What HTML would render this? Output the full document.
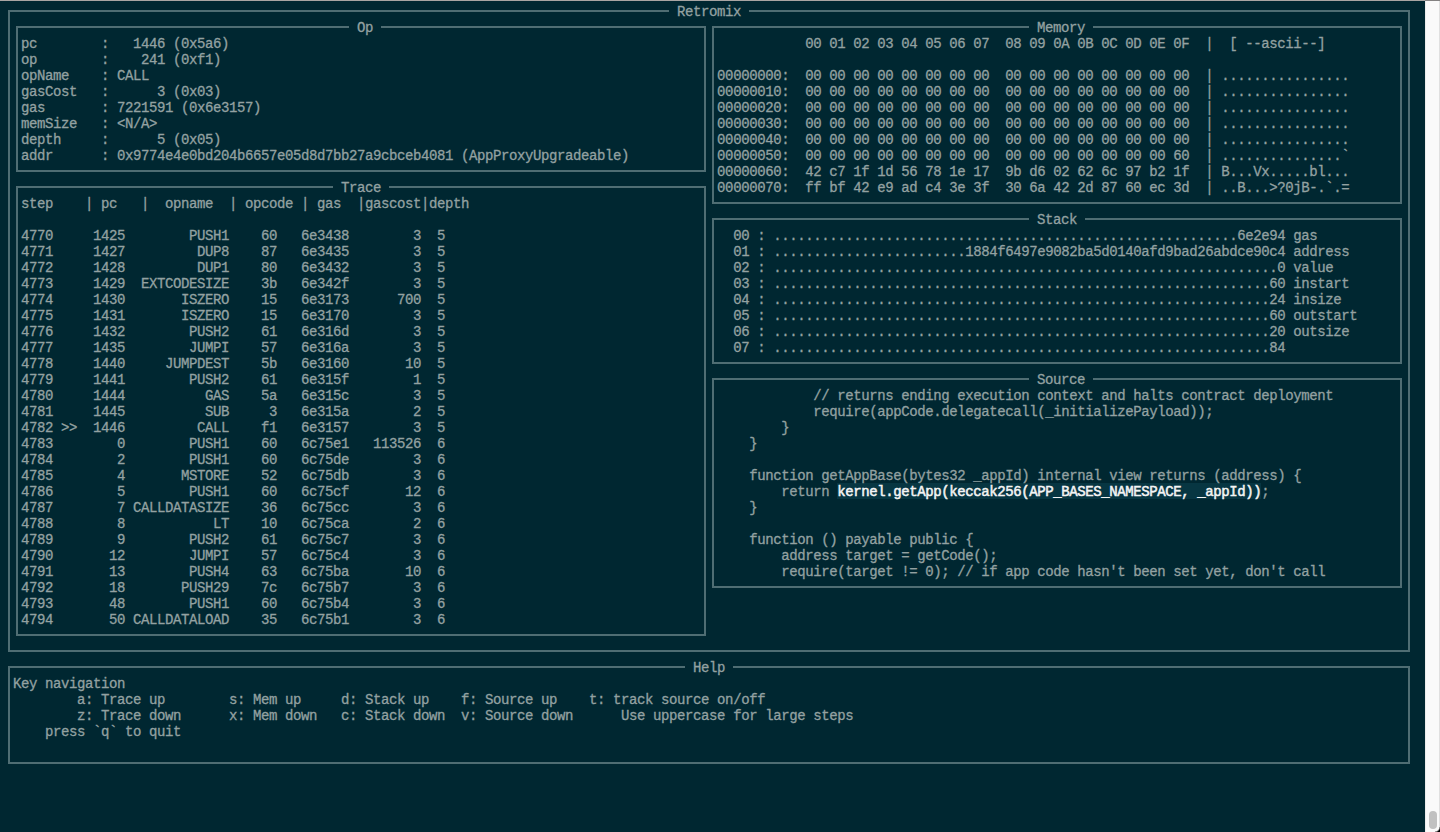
<!DOCTYPE html>
<html><head><meta charset="utf-8"><style>
html,body{margin:0;padding:0;width:1440px;height:832px;overflow:hidden;background:#002731}
body{position:relative}
.b{position:absolute;box-sizing:border-box;border:2px solid #4f6d73}
.t,pre{font-family:"Liberation Mono",monospace;font-size:14px;letter-spacing:-0.4px;line-height:16px;color:#93a1a1;-webkit-text-stroke:0.3px #93a1a1;white-space:pre;margin:0}
.t{position:absolute;height:16px;background:#002731}
pre{position:absolute;left:5px;top:4px}
.hl{color:#f4f4f4;-webkit-text-stroke:0.5px #f4f4f4}
#hlb{position:absolute;left:837px;top:483px;width:424px;height:16px;background:#073642}
#topl{position:absolute;left:0;top:0;width:1425px;height:1px;background:#a9a5a3}
#topr{position:absolute;left:1425px;top:0;width:15px;height:1px;background:#848282}
#sbl2{position:absolute;left:1425px;top:1px;width:1px;height:831px;background:#ececec}
#corner{position:absolute;left:1435px;top:827px;width:5px;height:5px;background:radial-gradient(circle at 0 0,transparent 4px,#000 5.5px)}
#sb{position:absolute;left:1425px;top:1px;width:15px;height:831px;background:#fafafa}
#sbl{position:absolute;left:1439px;top:1px;width:1px;height:831px;background:#e0e0e0}
#th{position:absolute;left:1429px;top:811px;width:8px;height:18px;border-radius:4px;background:#c1c1c1}
</style></head><body>
<div class="b" style="left:8px;top:10px;width:1402px;height:642px"></div>
<div class="t" style="left:669px;top:4px;width:80px"> Retromix </div>
<div class="b" style="left:16px;top:26px;width:690px;height:146px"></div>
<div class="t" style="left:349px;top:20px;width:32px"> Op </div>
<div class="b" style="left:16px;top:186px;width:690px;height:450px"></div>
<div class="t" style="left:333px;top:180px;width:56px"> Trace </div>
<div class="b" style="left:712px;top:26px;width:690px;height:178px"></div>
<div class="t" style="left:1029px;top:20px;width:64px"> Memory </div>
<div class="b" style="left:712px;top:218px;width:690px;height:146px"></div>
<div class="t" style="left:1029px;top:212px;width:56px"> Stack </div>
<div class="b" style="left:712px;top:378px;width:690px;height:210px"></div>
<div class="t" style="left:1029px;top:372px;width:64px"> Source </div>
<div class="b" style="left:8px;top:666px;width:1402px;height:98px"></div>
<div class="t" style="left:685px;top:660px;width:48px"> Help </div>
<div id="hlb"></div>
<pre>


  pc        :   1446 (0x5a6)                                                                        00 01 02 03 04 05 06 07  08 09 0A 0B 0C 0D 0E 0F  |  [ --ascii--]
  op        :    241 (0xf1)
  opName    : CALL                                                                       00000000:  00 00 00 00 00 00 00 00  00 00 00 00 00 00 00 00  | ................
  gasCost   :      3 (0x03)                                                              00000010:  00 00 00 00 00 00 00 00  00 00 00 00 00 00 00 00  | ................
  gas       : 7221591 (0x6e3157)                                                         00000020:  00 00 00 00 00 00 00 00  00 00 00 00 00 00 00 00  | ................
  memSize   : &lt;N/A&gt;                                                                      00000030:  00 00 00 00 00 00 00 00  00 00 00 00 00 00 00 00  | ................
  depth     :      5 (0x05)                                                              00000040:  00 00 00 00 00 00 00 00  00 00 00 00 00 00 00 00  | ................
  addr      : 0x9774e4e0bd204b6657e05d8d7bb27a9cbceb4081 (AppProxyUpgradeable)           00000050:  00 00 00 00 00 00 00 00  00 00 00 00 00 00 00 60  | ...............`
                                                                                         00000060:  42 c7 1f 1d 56 78 1e 17  9b d6 02 62 6c 97 b2 1f  | B...Vx.....bl...
                                                                                         00000070:  ff bf 42 e9 ad c4 3e 3f  30 6a 42 2d 87 60 ec 3d  | ..B...&gt;?0jB-.`.=
  step    | pc   |  opname  | opcode | gas  |gascost|depth

  4770     1425        PUSH1    60   6e3438        3  5                                    00 : ..........................................................6e2e94 gas
  4771     1427         DUP8    87   6e3435        3  5                                    01 : ........................1884f6497e9082ba5d0140afd9bad26abdce90c4 address
  4772     1428         DUP1    80   6e3432        3  5                                    02 : ...............................................................0 value
  4773     1429  EXTCODESIZE    3b   6e342f        3  5                                    03 : ..............................................................60 instart
  4774     1430       ISZERO    15   6e3173      700  5                                    04 : ..............................................................24 insize
  4775     1431       ISZERO    15   6e3170        3  5                                    05 : ..............................................................60 outstart
  4776     1432        PUSH2    61   6e316d        3  5                                    06 : ..............................................................20 outsize
  4777     1435        JUMPI    57   6e316a        3  5                                    07 : ..............................................................84
  4778     1440     JUMPDEST    5b   6e3160       10  5
  4779     1441        PUSH2    61   6e315f        1  5
  4780     1444          GAS    5a   6e315c        3  5                                              // returns ending execution context and halts contract deployment
  4781     1445          SUB     3   6e315a        2  5                                              require(appCode.delegatecall(_initializePayload));
  4782 &gt;&gt;  1446         CALL    f1   6e3157        3  5                                          }
  4783        0        PUSH1    60   6c75e1   113526  6                                      }
  4784        2        PUSH1    60   6c75de        3  6
  4785        4       MSTORE    52   6c75db        3  6                                      function getAppBase(bytes32 _appId) internal view returns (address) {
  4786        5        PUSH1    60   6c75cf       12  6                                          return <span class="hl">kernel.getApp(keccak256(APP_BASES_NAMESPACE, _appId))</span>;
  4787        7 CALLDATASIZE    36   6c75cc        3  6                                      }
  4788        8           LT    10   6c75ca        2  6
  4789        9        PUSH2    61   6c75c7        3  6                                      function () payable public {
  4790       12        JUMPI    57   6c75c4        3  6                                          address target = getCode();
  4791       13        PUSH4    63   6c75ba       10  6                                          require(target != 0); // if app code hasn&#x27;t been set yet, don&#x27;t call
  4792       18       PUSH29    7c   6c75b7        3  6
  4793       48        PUSH1    60   6c75b4        3  6
  4794       50 CALLDATALOAD    35   6c75b1        3  6



 Key navigation
         a: Trace up        s: Mem up     d: Stack up    f: Source up    t: track source on/off
         z: Trace down      x: Mem down   c: Stack down  v: Source down      Use uppercase for large steps
     press `q` to quit

</pre>
<div id="sb"></div><div id="sbl"></div><div id="th"></div><div id="topl"></div><div id="topr"></div><div id="sbl2"></div><div id="corner"></div>
</body></html>
